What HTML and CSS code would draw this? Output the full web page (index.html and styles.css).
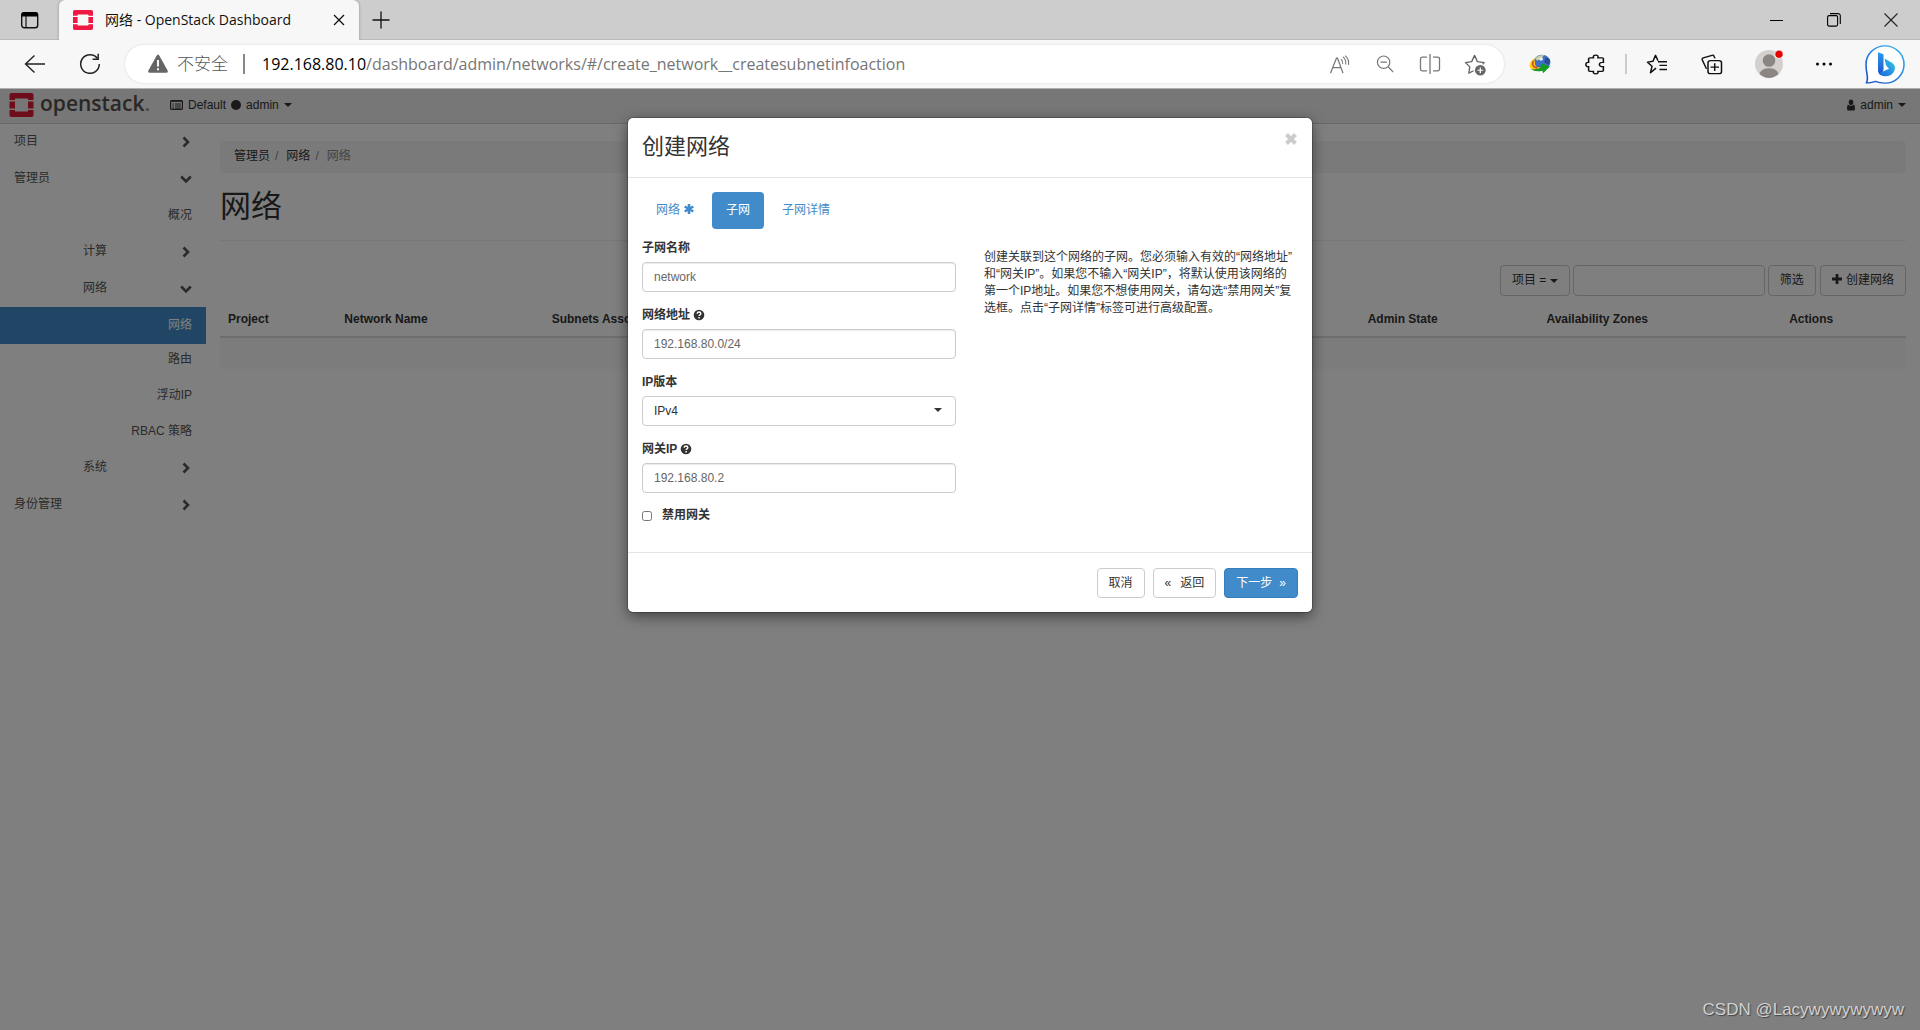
FILE: index.html
```html
<!DOCTYPE html>
<html lang="zh-CN">
<head>
<meta charset="utf-8">
<title>网络 - OpenStack Dashboard</title>
<link rel="stylesheet" href="styles.css">
</head>
<body>
<svg class="defs" width="0" height="0" aria-hidden="true">
  <symbol id="os-mark" viewBox="0 0 24 24">
    <path d="M2 0H22A2 2 0 0 1 24 2V7H18.500V5.500H5.500V7H0V2A2 2 0 0 1 2 0Z"/>
    <path d="M0 8.500H5.500V15.500H0ZM18.500 8.500H24V15.500H18.500Z"/>
    <path d="M0 17H5.500V18.500H18.500V17H24V22A2 2 0 0 1 22 24H2A2 2 0 0 1 0 22Z"/>
  </symbol>
  <symbol id="chev-right" viewBox="0 0 12 12"><path d="M3.500 1.500L8 6L3.500 10.500" fill="none" stroke="currentColor" stroke-width="2.600"/></symbol>
  <symbol id="chev-down" viewBox="0 0 12 12"><path d="M1.200 3.500L6 8.300L10.800 3.500" fill="none" stroke="currentColor" stroke-width="2.600"/></symbol>
  <symbol id="help" viewBox="0 0 12 12"><circle cx="6" cy="6" r="5.300" fill="currentColor"/><path d="M4.200 4.700C4.300 2.400 7.800 2.500 7.800 4.600C7.800 5.900 6.100 5.700 6.100 7.100M6.100 8V9.500" fill="none" stroke="#fff" stroke-width="1.500"/></symbol>
</svg>

<header class="browser">
  <div class="tabstrip">
    <button class="chrome-btn tab-actions" aria-label="标签操作"><svg width="20" height="20" viewBox="0 0 20 20"><rect x="1.700" y="2.700" width="16" height="15" rx="2.500" fill="none" stroke="#111" stroke-width="1.400"/><path d="M1.500 6.500V4.500A2.500 2.500 0 0 1 4 2H15.500A2.500 2.500 0 0 1 18 4.500V6.500Z" fill="#000"/><path d="M6 6V17" stroke="#111" stroke-width="1.200"/></svg></button>
    <div class="tab">
      <svg class="favicon" width="20" height="20"><use href="#os-mark"/></svg>
      <span class="tab-title">网络 - OpenStack Dashboard</span>
      <button class="chrome-btn" aria-label="关闭标签"><svg width="12" height="12" viewBox="0 0 12 12"><path d="M1 1L11 11M11 1L1 11" stroke="#111" stroke-width="1.300"/></svg></button>
    </div>
    <button class="chrome-btn new-tab" aria-label="新标签"><svg width="18" height="18" viewBox="0 0 18 18"><path d="M9 .5V17.500M.5 9H17.500" stroke="#111" stroke-width="1.300"/></svg></button>
    <div class="window-controls">
      <button class="chrome-btn" aria-label="最小化"><svg width="14" height="14" viewBox="0 0 14 14"><path d="M0 7.500H13" stroke="#000"/></svg></button>
      <button class="chrome-btn" aria-label="还原"><svg width="14" height="14" viewBox="0 0 14 14"><rect x=".6" y="2.600" width="10" height="10.500" rx="1.500" fill="none" stroke="#000" stroke-width="1.100"/><path d="M3 .6H11A2.200 2.200 0 0 1 13.300 2.800V11" fill="none" stroke="#000" stroke-width="1.100"/></svg></button>
      <button class="chrome-btn" aria-label="关闭"><svg width="14" height="14" viewBox="0 0 14 14"><path d="M.5 .5L13.500 13.500M13.500 .5L.5 13.500" stroke="#222" stroke-width="1.100"/></svg></button>
    </div>
  </div>
  <div class="toolbar">
    <button class="chrome-btn back" aria-label="返回"><svg width="22" height="20" viewBox="0 0 22 20"><path d="M10.500 1.500L1.500 10L10.500 18.500M1.500 10H21" fill="none" stroke="#222" stroke-width="1.400"/></svg></button>
    <button class="chrome-btn reload" aria-label="刷新"><svg width="22" height="22" viewBox="0 0 22 22"><path d="M18.500 5.500A9.300 9.300 0 1 0 20.300 11" fill="none" stroke="#222" stroke-width="1.500"/><path d="M19.200 .8V6.300H13.600" fill="none" stroke="#222" stroke-width="1.500"/></svg></button>
    <div class="address">
      <svg width="22" height="20" viewBox="0 0 22 20"><path d="M9.600 1.700Q11 -.5 12.400 1.700L20.600 16.500Q21.300 18.500 19.300 18.700H2.700Q.7 18.500 1.400 16.500Z" fill="#666"/><path d="M11 6V12.500M11 14.200V16.200" stroke="#fff" stroke-width="1.900"/></svg>
      <span class="insecure">不安全</span>
      <span class="divider"></span>
      <span class="url"><b>192.168.80.10</b>/dashboard/admin/networks/#/create_network__createsubnetinfoaction</span>
      <span class="address-icons">
        <button class="chrome-btn" aria-label="朗读"><svg width="22" height="19" viewBox="0 0 22 21" preserveAspectRatio="none"><path d="M1.500 20L7.500 3.500H8.500L14 20M3.700 14H12" fill="none" stroke="#777" stroke-width="1.300"/><path d="M12 4.500Q14.300 7 13.700 10M14 2Q17.500 5.500 16.700 10.500M16.300 .7Q20.500 5 19.500 11" fill="none" stroke="#777" stroke-width="1.100"/></svg></button>
        <button class="chrome-btn" aria-label="缩小"><svg width="22" height="20" viewBox="0 0 22 22"><circle cx="9.500" cy="9" r="6.800" fill="none" stroke="#777" stroke-width="1.300"/><path d="M14.500 14L20 20M6 9H13" stroke="#777" stroke-width="1.300"/></svg></button>
        <button class="chrome-btn" aria-label="分屏"><svg width="22" height="20" viewBox="0 0 22 22" preserveAspectRatio="none"><path d="M11 0V22M8 3.500H3.500Q1.500 3.500 1.500 5.500V16.500Q1.500 18.500 3.500 18.500H8M14 3.500H18.500Q20.500 3.500 20.500 5.500V16.500Q20.500 18.500 18.500 18.500H14" fill="none" stroke="#777" stroke-width="1.300"/></svg></button>
        <button class="chrome-btn" aria-label="收藏"><svg width="24" height="23" viewBox="0 0 24 24"><path d="M9.500 18.500L4.500 21L5.500 14.500L1 10L7.500 9L10.500 2.500L13.500 9L20.500 10L19 11.700" fill="none" stroke="#666" stroke-width="1.400" stroke-linejoin="round"/><circle cx="16.500" cy="18" r="5.600" fill="#666"/><path d="M16.500 15V21M13.500 18H19.500" stroke="#fff" stroke-width="1.300"/></svg></button>
      </span>
    </div>
    <div class="extensions">
      <button class="chrome-btn" aria-label="下载扩展"><svg width="22" height="20" viewBox="0 0 22 24" preserveAspectRatio="none"><circle cx="13" cy="9.500" r="8.500" fill="#3d70c4"/><path d="M6 5Q10 .5 15 1.300Q13 6 8 8Z" fill="#c9cf98"/><path d="M17 4L21 7L20 13L15 10Z" fill="#284b92"/><circle cx="12" cy="6" r="2" fill="#e3edf7"/><path d="M5 5Q-2 12 2 18Q7 22 14 19L13 16Q5 17 6 9Z" fill="#ffd21c"/><path d="M6 7Q2 14 9 16L8 18Q1 16 3 9Z" fill="#db5825"/><path d="M7 13Q11 16 13 14L12 11L21 15L14 23L13.500 20Q6 22 2 18Q9 19 12 16Z" fill="#139b22"/></svg></button>
      <button class="chrome-btn" aria-label="扩展"><svg width="22" height="21" viewBox="-1 0 21 24" preserveAspectRatio="none"><path d="M4.500 4.500H8Q7.300 1.200 10.200 1.200Q13 1.200 12.300 4.500H16.500Q17.500 4.500 17.500 5.500V9.500Q13.700 9.300 13.700 12Q13.700 14.700 17.500 14.500V18.500Q17.500 19.800 16.500 19.800H12.300Q13 22.700 10.200 22.700Q7.400 22.700 8 19.800H4.500Q3.400 19.800 3.400 18.500V14.500Q.8 14.700 .8 12Q.8 9.300 3.400 9.500V5.500Q3.400 4.500 4.500 4.500Z" fill="none" stroke="#111" stroke-width="1.500"/></svg></button>
      <span class="toolbar-sep"></span>
      <button class="chrome-btn" aria-label="收藏夹"><svg width="22" height="22" viewBox="0 0 22 24" preserveAspectRatio="none"><path d="M10 16.500L4.500 21.500L6 14.500L1.500 10L7 9L9.500 2.500L12 8.500" fill="none" stroke="#111" stroke-width="1.500" stroke-linejoin="round"/><path d="M12 9.500H21M13.500 13.500H21M13.500 18H21" stroke="#111" stroke-width="1.500"/></svg></button>
      <button class="chrome-btn" aria-label="集锦"><svg width="22" height="21" viewBox="0 0 22 24" preserveAspectRatio="none"><path d="M5.500 17L1.300 6.800Q.8 5.200 2.300 4.500L11 1.500Q12.500 1 13 2.500L14 5" fill="none" stroke="#111" stroke-width="1.500"/><rect x="7" y="7.500" width="13.500" height="15" rx="2.500" fill="#f7f7f7" stroke="#111" stroke-width="1.500"/><path d="M13.700 10.500V19.500M9.500 15H18" stroke="#111" stroke-width="1.500"/></svg></button>
      <button class="chrome-btn profile" aria-label="个人资料"><svg width="28" height="28" viewBox="0 0 28 28"><circle cx="14" cy="14" r="14" fill="#d3d0cd"/><circle cx="14" cy="10.500" r="6.300" fill="#8b8683"/><path d="M4.500 24Q6 18.300 14 18.300Q22 18.300 23.500 24Q14 32 4.500 24Z" fill="#8b8683"/><circle cx="24" cy="4.200" r="4.200" fill="#e60000" stroke="#f7f7f7"/></svg></button>
      <button class="chrome-btn" aria-label="更多"><svg width="18" height="4" viewBox="0 0 18 4"><circle cx="2.500" cy="2" r="1.500"/><circle cx="9" cy="2" r="1.500"/><circle cx="15.500" cy="2" r="1.500"/></svg></button>
      <button class="chrome-btn bing" aria-label="必应"><svg width="40" height="39" viewBox="0 0 40 46" preserveAspectRatio="none"><defs><linearGradient id="bing-ring" x1="0" y1="1" x2="1" y2="0"><stop offset="0" stop-color="#194bc8"/><stop offset=".5" stop-color="#2585df"/><stop offset="1" stop-color="#39b8ee"/></linearGradient><linearGradient id="bing-b" x1="0" y1="0" x2="0" y2="1"><stop offset="0" stop-color="#2b9bea"/><stop offset="1" stop-color="#1c50cc"/></linearGradient><linearGradient id="bing-bowl" x1="0" y1="1" x2="1" y2="0"><stop offset="0" stop-color="#1c65dc"/><stop offset="1" stop-color="#32c9ea"/></linearGradient></defs><path d="M1.500 44.500Q3 41 2 34Q1 29 1 23A19 22 0 1 1 20 45Q14 45 10.500 43Q6 45 1.500 44.500Z" fill="#fff" stroke="url(#bing-ring)" stroke-width="1.600"/><path d="M13 8.500L18.500 11V29L16.500 36Q13 34 13 30Z" fill="url(#bing-b)"/><path d="M19.500 16L27 21Q31 24 29.500 30Q27 37 20 37Q15.500 36.500 14.500 33L24 28L21 24Z" fill="url(#bing-bowl)"/></svg></button>
    </div>
  </div>
</header>

<div class="page">
  <nav class="navbar">
    <a class="brand" href="#"><svg width="25" height="24"><use href="#os-mark"/></svg><span>openstack<i>.</i></span></a>
    <a class="context" href="#"><svg width="13" height="12" viewBox="0 0 13 12"><rect x=".6" y="1.600" width="11.800" height="8.800" rx="1" fill="none" stroke="currentColor" stroke-width="1.200"/><path d="M1 2.200H12M2.500 5H4M5 5H10.800M2.500 7H4M5 7H10.800M2.500 9H4M5 9H10.800" stroke="currentColor" stroke-width="1.100"/></svg><span>Default</span><span class="dot"></span><span>admin</span><span class="caret"></span></a>
    <a class="user" href="#"><svg width="8" height="12" viewBox="0 0 10 12" preserveAspectRatio="none"><circle cx="5" cy="3.200" r="2.800" fill="currentColor"/><path d="M1 5.500Q5 8 9 5.500Q10 7 10 10Q9.800 11.500 8.500 11.500H1.500Q.2 11.500 0 10Q0 7 1 5.500Z" fill="currentColor"/></svg><span>admin</span><span class="caret"></span></a>
  </nav>
  <div class="content">
    <aside class="sidebar">
      <a class="group" href="#"><span>项目</span><svg width="12" height="12"><use href="#chev-right"/></svg></a>
      <a class="group" href="#"><span>管理员</span><svg width="12" height="12"><use href="#chev-down"/></svg></a>
      <a class="leaf" href="#">概况</a>
      <a class="group sub" href="#"><span>计算</span><svg width="12" height="12"><use href="#chev-right"/></svg></a>
      <a class="group sub" href="#"><span>网络</span><svg width="12" height="12"><use href="#chev-down"/></svg></a>
      <a class="leaf active" href="#">网络</a>
      <a class="leaf" href="#">路由</a>
      <a class="leaf" href="#">浮动IP</a>
      <a class="leaf" href="#">RBAC 策略</a>
      <a class="group sub" href="#"><span>系统</span><svg width="12" height="12"><use href="#chev-right"/></svg></a>
      <a class="group" href="#"><span>身份管理</span><svg width="12" height="12"><use href="#chev-right"/></svg></a>
    </aside>
    <main class="main">
      <div class="breadcrumb"><a href="#">管理员</a><i>/</i><a href="#">网络</a><i>/</i><span>网络</span></div>
      <h1>网络</h1>
      <div class="actions">
        <button class="btn">项目 = <span class="caret"></span></button>
        <input class="search" type="text" aria-label="筛选条件">
        <button class="btn">筛选</button>
        <button class="btn create"><svg width="10" height="10" viewBox="0 0 10 10"><path d="M5 0V10M0 5H10" stroke="currentColor" stroke-width="2.800"/></svg> 创建网络</button>
      </div>
      <table>
        <colgroup><col class="c-project"><col class="c-name"><col class="c-subnets"><col class="c-flag"><col class="c-flag"><col class="c-flag"><col class="c-admin"><col class="c-zones"><col class="c-actions"></colgroup>
        <thead><tr><th>Project</th><th>Network Name</th><th>Subnets Associated</th><th>Shared</th><th>External</th><th>Status</th><th>Admin State</th><th>Availability Zones</th><th>Actions</th></tr></thead>
        <tbody><tr><td colspan="9"></td></tr></tbody>
      </table>
    </main>
  </div>

  <div class="backdrop">
    <form class="modal" role="dialog" aria-labelledby="modal-title">
      <div class="modal-header">
        <h2 id="modal-title">创建网络</h2>
        <button type="button" class="close" aria-label="关闭"><svg width="12" height="12" viewBox="0 0 12 12"><path d="M1.500 1.500L10.500 10.500M10.500 1.500L1.500 10.500" stroke="#ccc" stroke-width="4"/></svg></button>
      </div>
      <div class="modal-body">
        <div class="steps">
          <a href="#">网络<svg width="10" height="10" viewBox="0 0 10 10"><path d="M5 0V10M.7 2.500L9.300 7.500M9.300 2.500L.7 7.500" stroke="currentColor" stroke-width="2.600"/></svg></a>
          <a class="current" href="#">子网</a>
          <a href="#">子网详情</a>
        </div>
        <div class="columns">
          <div class="fields">
            <div class="field"><label for="name">子网名称</label><input id="name" type="text" value="network"></div>
            <div class="field"><label for="cidr">网络地址 <svg width="12" height="12"><use href="#help"/></svg></label><input id="cidr" type="text" value="192.168.80.0/24"></div>
            <div class="field"><label for="version">IP版本</label><div class="select"><select id="version"><option>IPv4</option><option>IPv6</option></select><span class="caret"></span></div></div>
            <div class="field"><label for="gateway">网关IP <svg width="12" height="12"><use href="#help"/></svg></label><input id="gateway" type="text" value="192.168.80.2"></div>
            <label class="check"><input type="checkbox"><span>禁用网关</span></label>
          </div>
          <p class="help">创建关联到这个网络的子网。您必须输入有效的“网络地址”和“网关IP”。如果您不输入“网关IP”，将默认使用该网络的第一个IP地址。如果您不想使用网关，请勾选“禁用网关”复选框。点击“子网详情”标签可进行高级配置。</p>
        </div>
      </div>
      <div class="modal-footer">
        <button type="button" class="btn">取消</button>
        <button type="button" class="btn"><span class="angle">«</span>返回</button>
        <button type="button" class="btn primary">下一步<span class="angle">»</span></button>
      </div>
    </form>
    <div class="watermark">CSDN @Lacywywywywyw</div>
  </div>
</div>
</body>
</html>
```
FILE: styles.css
```css
* { box-sizing: border-box; }
body {
  margin: 0;
  min-height: 100vh;
  display: flex;
  flex-direction: column;
  font: 12px/17px "Liberation Sans", "Noto Sans CJK SC", sans-serif;
  color: #333;
  background: #fff;
}
a { color: inherit; text-decoration: none; }
button, input, select { font: inherit; color: inherit; }
svg { flex: none; }
.defs { position: absolute; }

/* Browser window */
.browser { font-family: "Open Sans", "Noto Sans CJK SC", sans-serif; border-bottom: 1px solid #b0b0b0; }
.chrome-btn { display: flex; align-items: center; justify-content: center; padding: 0; border: 0; background: none; }
.tabstrip { display: flex; align-items: center; height: 40px; background: #cdcdcd; box-shadow: inset 0 -1px #bbb; }
.tab-actions { width: 59px; }
.tab {
  display: flex;
  align-items: center;
  width: 300px;
  height: 40px;
  padding: 0 14px;
  background: #f7f7f7;
  border-radius: 6px 6px 0 0;
  box-shadow: 0 0 3px rgba(0, 0, 0, .3);
  clip-path: inset(0 -4px 0 -4px);
}
.favicon { fill: #ed1944; margin-right: 12px; }
.tab-title { flex: 1; font-size: 14px; line-height: 20px; color: #111; white-space: nowrap; }
.new-tab { width: 43px; }
.window-controls { display: flex; margin-left: auto; padding-right: 22px; gap: 43px; }
.toolbar { display: flex; align-items: center; height: 48px; background: #f7f7f7; }
.back { width: 22px; margin-left: 24px; }
.reload { width: 22px; margin: 0 24px 0 33px; }
.address {
  flex: 1;
  display: flex;
  align-items: center;
  height: 38px;
  padding: 0 16px 0 22px;
  border-radius: 19px;
  background: #fff;
  box-shadow: 0 0 3px rgba(0, 0, 0, .12);
}
.insecure { margin-left: 8px; font-size: 17px; line-height: 24px; font-weight: 300; color: #555; }
.divider { width: 2px; height: 20px; margin: 0 17px 0 15px; background: #888; }
.url { flex: 1; font-size: 16px; line-height: 24px; color: #767676; white-space: nowrap; }
.url b { font-weight: 400; color: #000; }
.address-icons { display: flex; align-items: center; gap: 23px; }
.extensions { display: flex; align-items: center; gap: 33px; padding: 0 15px 0 25px; }
.toolbar-sep { width: 2px; height: 20px; margin: 0 -14px; background: #ccc; }
.profile { margin: 0 -1px; }
.bing { margin-left: -1px; }

/* Dashboard */
.page { position: relative; flex: 1; }
.navbar { display: flex; align-items: center; height: 35px; padding: 0 14px 2px 9px; background: #eee; border-bottom: 1px solid #d0d0d0; }
.brand { display: flex; align-items: center; gap: 6px; width: 161px; fill: #da1a32; font: 600 21px/30px "Open Sans", sans-serif; color: #55504c; }
.brand span { padding-bottom: 5px; }
.brand i { font-style: normal; color: #999; }
.context, .user { display: flex; align-items: center; gap: 5px; }
.user { margin-left: auto; }
.dot { width: 10px; height: 10px; border-radius: 50%; background: #333; }
.caret { display: inline-block; border: 4px solid transparent; border-top-color: currentColor; border-bottom: 0; vertical-align: middle; }
.content { display: flex; }
.sidebar { width: 206px; margin-top: -1px; color: #555; }
.group { display: flex; align-items: center; justify-content: space-between; height: 37px; padding: 0 14px; }
.sub { padding-left: 83px; }
.leaf { display: flex; align-items: center; justify-content: flex-end; height: 36px; padding-right: 14px; }
.leaf.active { height: 37px; margin-bottom: -3px; background: #428bca; color: #fff; }
.main { flex: 1; min-width: 0; padding: 17px 14px 0; }
.breadcrumb { display: flex; gap: 5px; height: 32px; padding: 7px 14px; border-radius: 4px; background: #f5f5f5; color: #888; }
.breadcrumb a { color: #333; }
.breadcrumb i { font-style: normal; }
.breadcrumb i + * { margin-left: 3px; }
h1 { margin: 16px 0 24px; padding-bottom: 15px; border-bottom: 1px solid #eee; font-size: 31px; line-height: 36px; font-weight: 400; }
.actions { display: flex; justify-content: flex-end; gap: 3px; }
.btn { height: 31px; padding: 0 11px; border: 1px solid #ccc; border-radius: 4px; background: #fff; white-space: nowrap; }
.search { width: 192px; height: 31px; padding: 0 11px; border: 1px solid #ccc; border-radius: 4px; background: #fff; }
.create { margin-left: 1px; }
.create svg { margin-right: 1px; }
table { width: 100%; margin-top: 6px; border-collapse: collapse; table-layout: fixed; }
th { height: 35px; padding: 0 8px; border-bottom: 2px solid #ddd; text-align: left; white-space: nowrap; }
td { height: 32px; background: #f9f9f9; }
.c-project { width: 6.9%; }
.c-name { width: 12.3%; }
.c-subnets { width: 18.4%; }
.c-flag { width: 10%; }
.c-admin { width: 10.6%; }
.c-zones { width: 14.4%; }

/* Dialog */
.backdrop { position: absolute; inset: 0; display: flex; flex-direction: column; align-items: center; padding: 29px 0 0 20px; background: rgba(0, 0, 0, .5); }
.modal { width: 684px; max-width: 96%; border-radius: 5px; background: #fff; box-shadow: 0 4px 14px rgba(0, 0, 0, .5), 0 0 0 1px rgba(0, 0, 0, .2); }
.modal-header { display: flex; align-items: flex-start; justify-content: space-between; height: 60px; padding: 14px; border-bottom: 1px solid #e5e5e5; }
h2 { margin: 0; font-size: 22px; line-height: 30px; font-weight: 400; }
.close { display: flex; padding: 1px; border: 0; background: none; }
.modal-body { padding: 14px 14px 28px; }
.steps { display: flex; gap: 4px; color: #428bca; }
.steps a { height: 37px; padding: 10px 14px; border-radius: 4px; }
.steps svg { margin-left: 4px; }
.steps .current { background: #428bca; color: #fff; }
.columns { display: grid; grid-template-columns: 1fr 1fr; gap: 28px; }
.field { margin-top: 15px; }
.field:first-child { margin-top: 11px; }
.check { margin-top: 14px; }
.field label { display: block; height: 17px; margin-bottom: 5px; font-weight: 700; }
.field label svg { vertical-align: -2px; }
.field input, .field select { display: block; width: 100%; height: 30px; padding: 0 11px; border: 1px solid #ccc; border-radius: 4px; background: #fff; box-shadow: inset 0 1px 1px rgba(0, 0, 0, .08); color: #666; }
.field .select { position: relative; }
.field select { appearance: none; box-shadow: none; color: #333; }
.select .caret { position: absolute; top: 12px; right: 14px; }
.check { display: flex; align-items: center; gap: 10px; font-weight: 700; }
.check input { width: 10px; height: 10px; margin: 0; }
.help { margin: 20px 0 0; line-height: 17px; }
.modal-footer { display: flex; justify-content: flex-end; gap: 8px; padding: 15px 14px 14px; border-top: 1px solid #e5e5e5; }
.modal-footer .btn { height: 30px; }
.angle { margin-right: 9px; }
.primary { border-color: #357ebd; background: #428bca; color: #fff; }
.primary .angle { margin: 0 0 0 7px; }
.watermark { margin: auto 16px 8px auto; font-size: 17px; line-height: 24px; color: #d0d0d0; text-shadow: 1px 1px 1px #444; }
```
